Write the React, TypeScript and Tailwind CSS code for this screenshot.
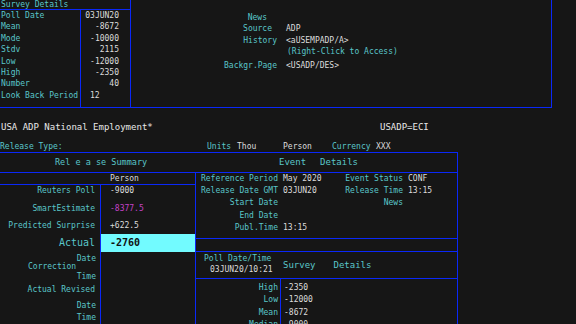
function TopLeft() {
  const rows: [string, string][] = [
    ["Poll Date", "03JUN20"],
    ["Mean", "-8672"],
    ["Mode", "-10000"],
    ["Stdv", "2115"],
    ["Low", "-12000"],
    ["High", "-2350"],
    ["Number", "40"],
    ["Look Back Period", "12"],
  ];
  return (
    <div className="flex w-[131px] flex-col border-r border-[#0a28f8]">
      <div className="h-[10px] border-b border-[#0a28f8] pl-[1px] leading-[9px] text-[#5ac6ca]">Survey Details</div>
      <div className="flex flex-1">
        <div className="w-[81px] border-r border-[#0a28f8] text-[#5ac6ca]">
          {rows.map(([l]) => (
            <div key={l} className="h-[11.4px] whitespace-nowrap pl-[1px] leading-[11.4px]">{l}</div>
          ))}
        </div>
        <div className="flex-1 pr-[11px] text-right">
          {rows.map(([l, v]) =>
            l === "Look Back Period" ? (
              <div key={l} className="h-[11.4px] pl-[9px] text-left leading-[11.4px]">{v}</div>
            ) : (
              <div key={l} className="h-[11.4px] leading-[11.4px]">{v}</div>
            )
          )}
        </div>
      </div>
    </div>
  );
}

function TopRight() {
  return (
    <div className="w-[421px] border-r border-[#0a28f8] pt-[12px]">
      <div className="flex h-[11px] leading-[11px]">
        <div className="w-[146px] pr-[10px] text-right text-[#5ac6ca]">News</div>
      </div>
      <div className="flex h-[11px] leading-[11px]">
        <div className="w-[146px] pr-[5px] text-right text-[#5ac6ca]">Source</div>
        <div className="pl-[9px]">ADP</div>
      </div>
      <div className="mt-[1px] flex h-[11px] leading-[11px]">
        <div className="w-[146px] text-right text-[#5ac6ca]">History</div>
        <div className="pl-[9px]">&lt;aUSEMPADP/A&gt;</div>
      </div>
      <div className="flex h-[11px] leading-[11px]">
        <div className="w-[146px]"></div>
        <div className="pl-[10px] text-[#5ac6ca]">(Right-Click to Access)</div>
      </div>
      <div className="mt-[3px] flex h-[11px] leading-[11px]">
        <div className="w-[146px] text-right text-[#5ac6ca]">Backgr.Page</div>
        <div className="pl-[9px]">&lt;USADP/DES&gt;</div>
      </div>
    </div>
  );
}

function LeftCol() {
  return (
    <div className="w-[196px] border-r border-[#0a28f8]">
      <div className="h-[12px] border-b border-[#0a28f8] pl-[110px] leading-[11px]">Person</div>
      <div className="flex h-[15px]">
        <div className="w-[101px] border-r border-[#0a28f8] pr-[5px] text-right leading-[12px] text-[#5ac6ca]">Reuters Poll</div>
        <div className="flex-1 pl-[9px] leading-[12px]">-9000</div>
      </div>
      <div className="flex h-[17px]">
        <div className="w-[101px] border-r border-[#0a28f8] pr-[5px] text-right leading-[17px] text-[#5ac6ca]">SmartEstimate</div>
        <div className="flex-1 pl-[9px] leading-[17px] text-[#c442c8]">-8377.5</div>
      </div>
      <div className="flex h-[17px]">
        <div className="w-[101px] border-r border-[#0a28f8] pr-[5px] text-right leading-[17px] text-[#5ac6ca]">Predicted Surprise</div>
        <div className="flex-1 pl-[9px] leading-[17px]">+622.5</div>
      </div>
      <div className="flex h-[18px]">
        <div className="w-[101px] border-r border-[#0a28f8] pr-[5px] text-right text-[10px] leading-[17px] text-[#5ac6ca]">Actual</div>
        <div className="flex-1 bg-[#72fbff] pl-[9px] text-[10px] font-bold leading-[18px] text-[#101010]">-2760</div>
      </div>
      <div className="flex h-[31px]">
        <div className="w-[101px] border-r border-[#0a28f8] pt-[3px] text-[#5ac6ca]">
          <div className="h-[8px] pr-[4px] text-right leading-[8px]">Date</div>
          <div className="h-[8px] pl-[28px] leading-[8px]">Correction</div>
          <div className="mt-[2px] h-[8px] pr-[4px] text-right leading-[8px]">Time</div>
        </div>
        <div className="flex-1"></div>
      </div>
      <div className="flex h-[14px]">
        <div className="w-[101px] border-r border-[#0a28f8] pr-[5px] text-right leading-[14px] text-[#5ac6ca]">Actual Revised</div>
        <div className="flex-1"></div>
      </div>
      <div className="flex h-[30px]">
        <div className="w-[101px] border-r border-[#0a28f8] pt-[5px] text-[#5ac6ca]">
          <div className="h-[8px] pr-[4px] text-right leading-[8px]">Date</div>
          <div className="mt-[4px] h-[8px] pr-[4px] text-right leading-[8px]">Time</div>
        </div>
        <div className="flex-1"></div>
      </div>
    </div>
  );
}

function RightCol() {
  const ev: [string, string, string, string][] = [
    ["Reference Period", "May 2020", "Event Status", "CONF"],
    ["Release Date GMT", "03JUN20", "Release Time", "13:15"],
    ["Start Date", "", "News", ""],
    ["End Date", "", "", ""],
    ["Publ.Time", "13:15", "", ""],
  ];
  const sv: [string, string][] = [
    ["High", "-2350"],
    ["Low", "-12000"],
    ["Mean", "-8672"],
    ["Median", "-9000"],
  ];
  return (
    <div className="flex-1">
      <div className="h-[66px] border-b border-[#0a28f8]">
        {ev.map(([a, b, c, d], i) => (
          <div key={a} className={i === 0 ? "flex h-[11.5px] leading-[11.5px]" : "flex h-[12.5px] leading-[12.5px]"}>
            <div className="w-[82px] whitespace-nowrap text-right text-[#5ac6ca]">{a}</div>
            <div className="w-[64px] whitespace-nowrap pl-[5px]">{b}</div>
            <div className="w-[61px] whitespace-nowrap text-right text-[#5ac6ca]">{c}</div>
            <div className="whitespace-nowrap pl-[5px]">{d}</div>
          </div>
        ))}
      </div>
      <div className="h-[13px] border-b border-[#0a28f8]"></div>
      <div className="flex h-[27px] border-b border-[#0a28f8]">
        <div className="w-[87px] pt-[2px] text-[#5ac6ca]">
          <div className="h-[9px] whitespace-nowrap pl-[8px] leading-[9px]">Poll Date/Time</div>
          <div className="mt-[2px] h-[9px] whitespace-nowrap pl-[14px] leading-[9px] text-[#dcdcdc]">03JUN20/10:21</div>
        </div>
        <div className="text-[9px] leading-[26px] text-[#5ac6ca]">
          <span>Survey</span>
          <span className="ml-[18px]">Details</span>
        </div>
      </div>
      <div className="flex">
        <div className="w-[85px] border-r border-[#0a28f8] pt-[3px] pr-[2px] text-right text-[#5ac6ca]">
          {sv.map(([l]) => (
            <div key={l} className="h-[12.4px] leading-[12.4px]">{l}</div>
          ))}
          <div className="h-[20px]"></div>
        </div>
        <div className="flex-1 pt-[3px] pl-[3px]">
          {sv.map(([l, v]) => (
            <div key={l} className="h-[12.4px] leading-[12.4px]">{v}</div>
          ))}
        </div>
      </div>
    </div>
  );
}

export default function App() {
  return (
    <div className="h-[324px] w-[576px] overflow-hidden bg-[#161616] font-['DejaVu_Sans_Mono','Liberation_Mono',monospace] text-[8px] leading-[11px] text-[#dcdcdc]">
      <div className="flex h-[108px] w-[552px] border-b border-[#0a28f8]">
        <TopLeft />
        <TopRight />
      </div>
      <div className="h-[44px] pt-[13px]">
        <div className="flex h-[12px] text-[9px] leading-[12px] text-[#e8e8e8]">
          <div className="w-[380px] pl-[1px]">USA ADP National Employment*</div>
          <div>USADP=ECI</div>
        </div>
        <div className="mt-[9px] flex h-[10px] leading-[10px]">
          <span className="w-[207px] text-[#5ac6ca]">Release Type:</span>
          <span className="w-[30px] text-[#5ac6ca]">Units</span>
          <span className="w-[46px]">Thou</span>
          <span className="w-[49px]">Person</span>
          <span className="w-[44px] text-[#5ac6ca]">Currency</span>
          <span>XXX</span>
        </div>
      </div>
      <div className="w-[458px] border-t border-r border-[#0a28f8]">
        <div className="flex h-[20px] border-b border-[#0a28f8] text-[#5ac6ca]">
          <div className="w-[196px] whitespace-pre pl-[55px] text-[8.5px] leading-[19px]">Rel e a se Summary</div>
          <div className="flex-1 pl-[83px] text-[9px] leading-[19px]">
            <span>Event</span>
            <span className="ml-[14px]">Details</span>
          </div>
        </div>
        <div className="flex">
          <LeftCol />
          <RightCol />
        </div>
      </div>
    </div>
  );
}
